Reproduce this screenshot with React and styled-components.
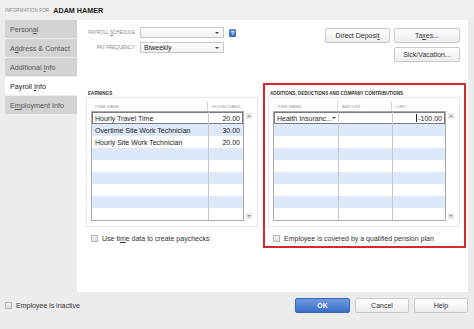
import React from 'react';
import styled, { createGlobalStyle } from 'styled-components';

const GlobalStyle = createGlobalStyle`
  html, body {
    margin: 0;
    padding: 0;
    background: #ececec;
    font-family: "Liberation Sans", Arial, sans-serif;
  }
`;

const Window = styled.div`
  width: 474px;
  height: 329px;
  background: #ececec;
  display: flex;
  flex-direction: column;
  overflow: hidden;
`;

const Header = styled.div`
  height: 20px;
  display: flex;
  align-items: center;
  padding-left: 5px;
  gap: 4px;
  background: #efefef;
`;

const HeaderCaption = styled.span`
  font-size: 4.6px;
  color: #8a8a8a;
  letter-spacing: 0.1px;
`;

const HeaderName = styled.span`
  font-size: 7.2px;
  font-weight: bold;
  color: #222;
`;

const Main = styled.div`
  display: flex;
  height: 272px;
  padding-right: 6px;
`;

const Tabs = styled.div`
  width: 72px;
  padding-left: 5px;
  display: flex;
  flex-direction: column;
  gap: 1px;
`;

const Tab = styled.div`
  height: 18px;
  display: flex;
  align-items: center;
  padding-left: 5px;
  font-size: 7.2px;
  color: ${(p) => (p.$active ? '#222' : '#555')};
  background: ${(p) => (p.$active ? '#ffffff' : '#d3d3d3')};
  border-radius: 2px 0 0 2px;
`;

const Panel = styled.div`
  flex: 1;
  background: #fff;
  padding: 7px 8px 0 9px;
  display: flex;
  flex-direction: column;
`;

const TopRow = styled.div`
  height: 62px;
  display: flex;
  justify-content: space-between;
  align-items: flex-start;
`;

const Form = styled.div`
  display: flex;
  flex-direction: column;
  gap: 4px;
`;

const FormRow = styled.div`
  display: flex;
  align-items: center;
  height: 11px;
  gap: 5px;
`;

const FieldLabel = styled.span`
  width: 49px;
  text-align: right;
  font-size: 4.6px;
  color: #888;
  white-space: nowrap;
`;

const Select = styled.div`
  width: 75px;
  height: 9px;
  border: 1px solid #c8c8c8;
  background: linear-gradient(#ffffff, #f1f1f1);
  display: flex;
  align-items: center;
  justify-content: space-between;
  padding: 0 4px 0 3px;
  font-size: 7px;
  color: #222;
`;

const Arrow = styled.span`
  width: 0;
  height: 0;
  border-left: 2px solid transparent;
  border-right: 2px solid transparent;
  border-top: 2.5px solid #444;
`;

const HelpIcon = styled.span`
  width: 7px;
  height: 8px;
  background: linear-gradient(#5f95e0, #2e63bf);
  border-radius: 1px;
  color: #fff;
  font-size: 6px;
  font-weight: bold;
  display: flex;
  align-items: center;
  justify-content: center;
`;

const ButtonGrid = styled.div`
  margin-top: 1px;
  display: grid;
  grid-template-columns: 65px 66px;
  column-gap: 4px;
  row-gap: 4px;
`;

const Button = styled.div`
  height: ${(p) => p.$h || 15}px;
  width: ${(p) => (p.$w ? `${p.$w}px` : 'auto')};
  box-sizing: border-box;
  border: 1px solid ${(p) => (p.$primary ? '#3a66b8' : '#c9c9c9')};
  border-radius: 2px;
  background: ${(p) =>
    p.$primary ? 'linear-gradient(#6d9ce4, #3b6dc8)' : 'linear-gradient(#ffffff, #ececec)'};
  color: ${(p) => (p.$primary ? '#fff' : '#333')};
  font-weight: ${(p) => (p.$primary ? 'bold' : 'normal')};
  font-size: 7px;
  display: flex;
  align-items: center;
  justify-content: center;
  grid-column: ${(p) => p.$col || 'auto'};
`;

const Sections = styled.div`
  display: flex;
  gap: 10px;
`;

const Section = styled.div`
  position: relative;
  width: ${(p) => p.$w}px;
  display: flex;
  flex-direction: column;
`;

const Highlight = styled.div`
  position: absolute;
  top: -6px;
  left: -5px;
  right: -6px;
  bottom: -5px;
  border: 2px solid #d8262b;
  pointer-events: none;
`;

const SectionTitle = styled.div`
  height: 8px;
  padding-left: 2px;
  font-size: 4.6px;
  font-weight: bold;
  color: #333;
  display: flex;
  align-items: center;
  white-space: nowrap;
`;

const GroupBox = styled.div`
  border: 1px solid #e6e6e6;
  padding: 3px 4px 5px 4px;
  display: flex;
  flex-direction: column;
`;

const ColumnHeads = styled.div`
  display: grid;
  grid-template-columns: ${(p) => p.$cols};
  height: 10px;
  margin-right: 9px;
`;

const ColumnHead = styled.div`
  font-size: 4.4px;
  color: #9a9a9a;
  padding-left: 4px;
  display: flex;
  align-items: center;
  white-space: nowrap;
  overflow: hidden;
  border-left: ${(p) => (p.$first ? 'none' : '1px solid #d6d6d6')};
`;

const TableWrap = styled.div`
  display: flex;
`;

const Table = styled.div`
  flex: 1;
  border: 1px solid #a9a9a9;
  display: flex;
  flex-direction: column;
`;

const Row = styled.div`
  display: grid;
  grid-template-columns: ${(p) => p.$cols};
  height: 12px;
  box-sizing: border-box;
  background: ${(p) => (p.$odd ? '#dde9f8' : '#fff')};
  box-shadow: ${(p) => (p.$active ? 'inset 0 0 0 1px #7b7b7b' : 'none')};
`;

const Cell = styled.div`
  font-size: 7px;
  color: #222;
  display: flex;
  align-items: center;
  justify-content: ${(p) => (p.$right ? 'flex-end' : 'space-between')};
  padding: 0 3px;
  white-space: nowrap;
  overflow: hidden;
  border-left: ${(p) => (p.$first ? 'none' : '1px solid #c9c9c9')};
`;

const Caret = styled.span`
  width: 1px;
  height: 8px;
  background: #222;
  margin-right: 1px;
`;

const ScrollBar = styled.div`
  width: 9px;
  display: flex;
  flex-direction: column;
  justify-content: space-between;
  align-items: center;
  padding: 2px 0;
`;

const ScrollBtn = styled.span`
  width: 6px;
  height: 6px;
  background: #e8e8e8;
  display: flex;
  align-items: center;
  justify-content: center;

  &::after {
    content: '';
    border-left: 2px solid transparent;
    border-right: 2px solid transparent;
    ${(p) => (p.$down ? 'border-top: 2.5px solid #9a9a9a;' : 'border-bottom: 2.5px solid #9a9a9a;')}
  }
`;

const CheckRow = styled.div`
  display: flex;
  align-items: center;
  gap: 4px;
  height: 10px;
  margin-top: ${(p) => p.$mt || 0}px;
  padding-left: ${(p) => p.$pl || 0}px;
  font-size: 7px;
  color: #333;
`;

const Box = styled.span`
  width: 5px;
  height: 5px;
  border: 1px solid #b5b5b5;
  background: linear-gradient(#f4f4f4, #dcdcdc);
`;

const Footer = styled.div`
  flex: 1;
  display: flex;
  justify-content: space-between;
  align-items: flex-start;
  padding: 6px 6px 0 5px;
`;

const FooterButtons = styled.div`
  display: flex;
  gap: 5px;
`;

const earningCols = '116px 1fr';
const additionCols = '64px 54px 1fr';

const earnings = [
  ['Hourly Travel Time', '20.00'],
  ['Overtime Site Work Technician', '30.00'],
  ['Hourly Site Work Technician', '20.00'],
];

const rows = Array.from({ length: 9 }, (_, i) => i);

export default function App() {
  return (
    <Window>
      <GlobalStyle />
      <Header>
        <HeaderCaption>INFORMATION FOR</HeaderCaption>
        <HeaderName>ADAM HAMER</HeaderName>
      </Header>
      <Main>
        <Tabs>
          <Tab><span>Person<u>a</u>l</span></Tab>
          <Tab><span>A<u>d</u>dress &amp; Contact</span></Tab>
          <Tab><span>Additional <u>I</u>nfo</span></Tab>
          <Tab $active><span>Payroll <u>I</u>nfo</span></Tab>
          <Tab><span>E<u>m</u>ployment Info</span></Tab>
        </Tabs>
        <Panel>
          <TopRow>
            <Form>
              <FormRow>
                <FieldLabel>PAYROLL <u>S</u>CHEDULE</FieldLabel>
                <Select>
                  <span />
                  <Arrow />
                </Select>
                <HelpIcon>?</HelpIcon>
              </FormRow>
              <FormRow>
                <FieldLabel>PAY FREQUENCY</FieldLabel>
                <Select>
                  <span>Biweekly</span>
                  <Arrow />
                </Select>
              </FormRow>
            </Form>
            <ButtonGrid>
              <Button><span>Direct Deposi<u>t</u></span></Button>
              <Button><span>Ta<u>x</u>es...</span></Button>
              <Button $col="2">Sick/Vacation...</Button>
            </ButtonGrid>
          </TopRow>
          <Sections>
            <Section $w={172}>
              <SectionTitle>EARNINGS</SectionTitle>
              <GroupBox>
                <ColumnHeads $cols={earningCols}>
                  <ColumnHead $first>ITEM NAME</ColumnHead>
                  <ColumnHead>HOURLY/ANN...</ColumnHead>
                </ColumnHeads>
                <TableWrap>
                  <Table>
                    {rows.map((i) => (
                      <Row key={i} $cols={earningCols} $odd={i % 2 === 1} $active={i === 0}>
                        <Cell $first>{earnings[i] ? earnings[i][0] : ''}</Cell>
                        <Cell $right>{earnings[i] ? earnings[i][1] : ''}</Cell>
                      </Row>
                    ))}
                  </Table>
                  <ScrollBar>
                    <ScrollBtn />
                    <ScrollBtn $down />
                  </ScrollBar>
                </TableWrap>
              </GroupBox>
              <CheckRow $mt={6} $pl={5}>
                <Box />
                <span>Use ti<u>m</u>e data to create paychecks</span>
              </CheckRow>
            </Section>
            <Section $w={192}>
              <Highlight />
              <SectionTitle>ADDITIONS, DEDUCTIONS AND COMPANY CONTRIBUTIONS</SectionTitle>
              <GroupBox>
                <ColumnHeads $cols={additionCols}>
                  <ColumnHead $first>ITEM NAME</ColumnHead>
                  <ColumnHead>AMOUNT</ColumnHead>
                  <ColumnHead>LIMIT</ColumnHead>
                </ColumnHeads>
                <TableWrap>
                  <Table>
                    {rows.map((i) => (
                      <Row key={i} $cols={additionCols} $odd={i % 2 === 1} $active={i === 0}>
                        <Cell $first>
                          {i === 0 && (
                            <>
                              <span>Health Insuranc...</span>
                              <Arrow />
                            </>
                          )}
                        </Cell>
                        <Cell />
                        <Cell $right>
                          {i === 0 && (
                            <>
                              <Caret />
                              <span>-100.00</span>
                            </>
                          )}
                        </Cell>
                      </Row>
                    ))}
                  </Table>
                  <ScrollBar>
                    <ScrollBtn />
                    <ScrollBtn $down />
                  </ScrollBar>
                </TableWrap>
              </GroupBox>
              <CheckRow $mt={6} $pl={5}>
                <Box />
                <span>Employee is covered by a qualified pension plan</span>
              </CheckRow>
            </Section>
          </Sections>
        </Panel>
      </Main>
      <Footer>
        <CheckRow $mt={2}>
          <Box />
          <span>Employee is inactive</span>
        </CheckRow>
        <FooterButtons>
          <Button $primary $w={55}>OK</Button>
          <Button $w={54}>Cancel</Button>
          <Button $w={54}>Help</Button>
        </FooterButtons>
      </Footer>
    </Window>
  );
}
